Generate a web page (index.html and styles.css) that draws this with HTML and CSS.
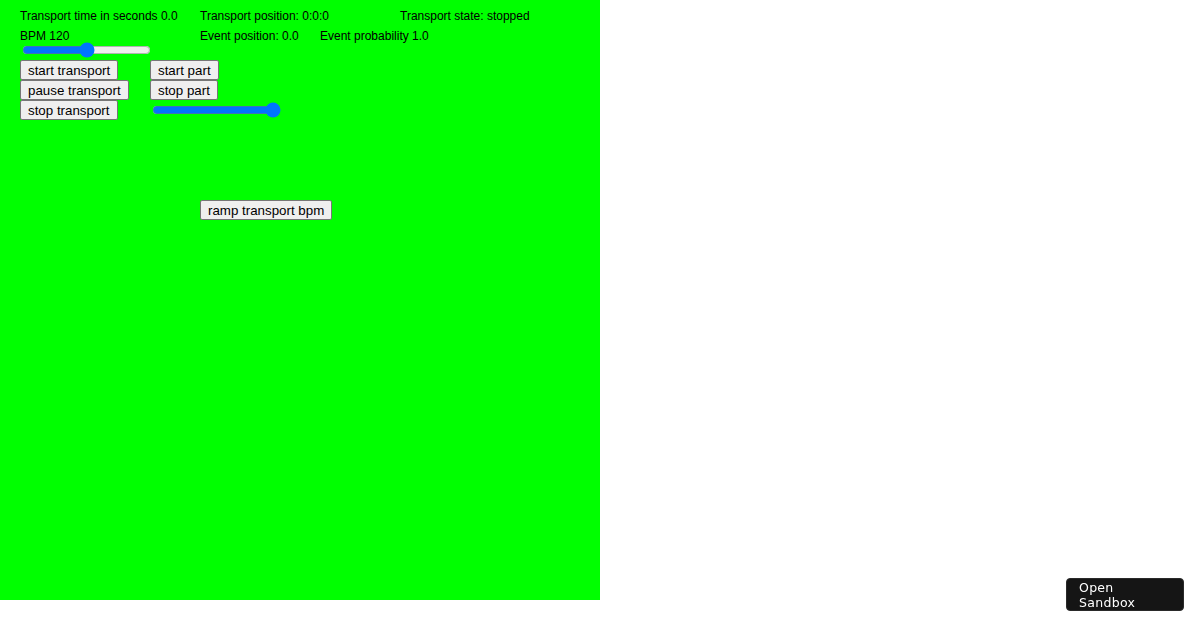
FILE: index.html
```html
<!DOCTYPE html>
<html>
<head>
<meta charset="utf-8">
<link rel="stylesheet" href="styles.css">
</head>
<body>
<div class="stage">
  <div class="line line1">
    <div class="cell w180">Transport time in seconds 0.0</div>
    <div class="cell w200">Transport position: 0:0:0</div>
    <div class="cell">Transport state: stopped</div>
  </div>
  <div class="line line2">
    <div class="cell w180">BPM 120</div>
    <div class="cell w120">Event position: 0.0</div>
    <div class="cell">Event probability 1.0</div>
  </div>
  <div class="controls">
    <div class="col colA">
      <input class="range" type="range" min="0" max="240" value="120">
      <button class="btn">start transport</button>
      <button class="btn">pause transport</button>
      <button class="btn">stop transport</button>
    </div>
    <div class="col colB">
      <button class="btn">start part</button>
      <button class="btn">stop part</button>
      <input class="range" type="range" min="0" max="1" step="0.01" value="1">
    </div>
  </div>
  <div class="ramp">
    <button class="btn">ramp transport bpm</button>
  </div>
</div>
<a class="sandbox"><span class="sandbox-text">Open Sandbox</span></a>
</body>
</html>
```
FILE: styles.css
```css
html, body {
  margin: 0;
  padding: 0;
  background: #ffffff;
}
.stage {
  width: 600px;
  height: 600px;
  box-sizing: border-box;
  background: #00ff00;
  padding: 10px 0 0 20px;
  font-family: "Liberation Sans", Arial, sans-serif;
  font-size: 12px;
  color: #000;
}
.line {
  display: flex;
}
.line1 { height: 20px; }
.line2 { height: 10px; }
.cell {
  line-height: 12px;
  white-space: nowrap;
}
.w180 { width: 180px; }
.w200 { width: 200px; }
.w120 { width: 120px; }
.controls {
  display: flex;
}
.col {
  display: flex;
  flex-direction: column;
  align-items: flex-start;
}
.colA { width: 130px; }
.colB { padding-top: 20px; }
.range {
  margin: 2px;
  width: 129px;
  height: 16px;
  accent-color: #0075ff;
}
.btn {
  height: 20px;
  box-sizing: border-box;
  font-family: "Liberation Sans", Arial, sans-serif;
  font-size: 13.333px;
  line-height: 17px;
  padding: 0 7px;
  border: 1px solid #767676;
  border-radius: 2px;
  background: #efefef;
  color: #000;
  margin: 0;
}
.ramp {
  padding: 80px 0 0 180px;
}
.sandbox {
  position: fixed;
  right: 16px;
  bottom: 19px;
  width: 118px;
  height: 33px;
  box-sizing: border-box;
  background: #151515;
  border: 1px solid #2a2a2a;
  border-radius: 4px;
  padding: 1px 0 0 12px;
  color: #ffffff;
  font-family: "DejaVu Sans", sans-serif;
  font-size: 12.5px;
  line-height: 15px;
  letter-spacing: 0.3px;
}
.sandbox-text {
  display: block;
  width: 60px;
}
```
